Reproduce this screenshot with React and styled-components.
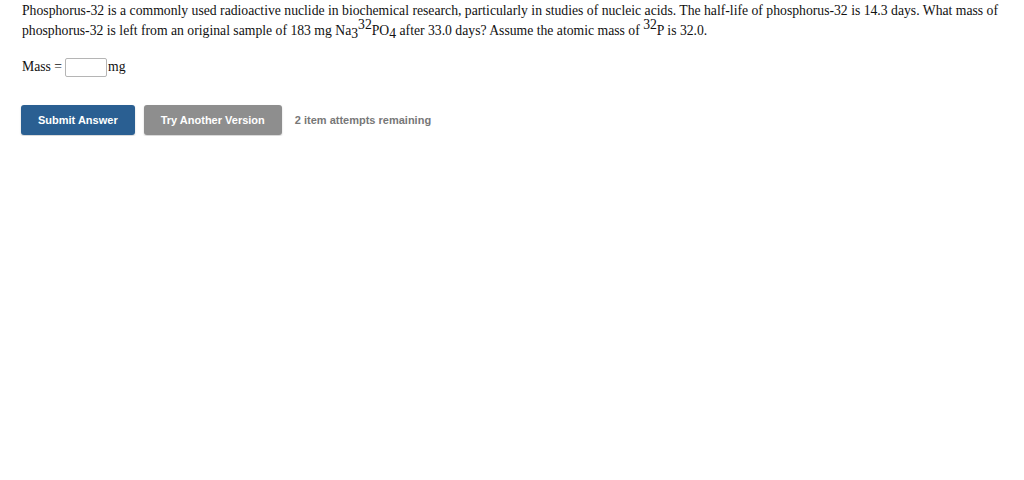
import styled, { createGlobalStyle } from "styled-components"

const Global = createGlobalStyle`
  body {
    margin: 0;
    background: #fff;
  }
`

const Page = styled.div`
  padding: 1px 22px;
  font-family: "Liberation Serif", "Times New Roman", serif;
  font-size: 13.7px;
  color: #111;
`

const Question = styled.p`
  margin: 0;
  line-height: 20px;
  width: 990px;
`

const Sup = styled.sup`
  font-size: 13.7px;
  line-height: 0;
  vertical-align: 6px;
`

const Sub = styled.sub`
  font-size: 13.7px;
  line-height: 0;
  vertical-align: -3px;
`

const Answer = styled.div`
  display: flex;
  align-items: center;
  margin-top: 16px;
  height: 20px;
`

const Box = styled.input`
  width: 38px;
  height: 15px;
  margin: 0 1px 0 3px;
  border: 1px solid #b5b5b5;
  border-radius: 2px;
  padding: 1px;
`

const Actions = styled.div`
  display: flex;
  align-items: center;
  gap: 9px;
  margin-top: 28px;
  margin-left: -1px;
  font-family: "Liberation Sans", Arial, sans-serif;
`

const Button = styled.button`
  height: 30px;
  padding: 0 ${p => p.$pad}px;
  border: none;
  border-radius: 3px;
  background: ${p => p.$bg};
  color: #fff;
  font-family: inherit;
  font-size: 11px;
  font-weight: bold;
  box-shadow: 0 1px 2px rgba(0, 0, 0, 0.2);
`

const Remaining = styled.span`
  margin-left: 4px;
  font-size: 11px;
  font-weight: bold;
  color: #777;
`

export default function App() {
  return (
    <Page>
      <Global />
      <Question>
        Phosphorus-32 is a commonly used radioactive nuclide in biochemical research, particularly in studies of nucleic acids. The half-life of phosphorus-32 is 14.3 days. What mass of phosphorus-32 is left from an original sample of 183 mg Na<Sub>3</Sub><Sup>32</Sup>PO<Sub>4</Sub> after 33.0 days? Assume the atomic mass of <Sup>32</Sup>P is 32.0.
      </Question>
      <Answer>
        Mass = <Box type="text" /> mg
      </Answer>
      <Actions>
        <Button $bg="#2a5f92" $pad={17}>Submit Answer</Button>
        <Button $bg="#8e8e8e" $pad={17}>Try Another Version</Button>
        <Remaining>2 item attempts remaining</Remaining>
      </Actions>
    </Page>
  )
}
